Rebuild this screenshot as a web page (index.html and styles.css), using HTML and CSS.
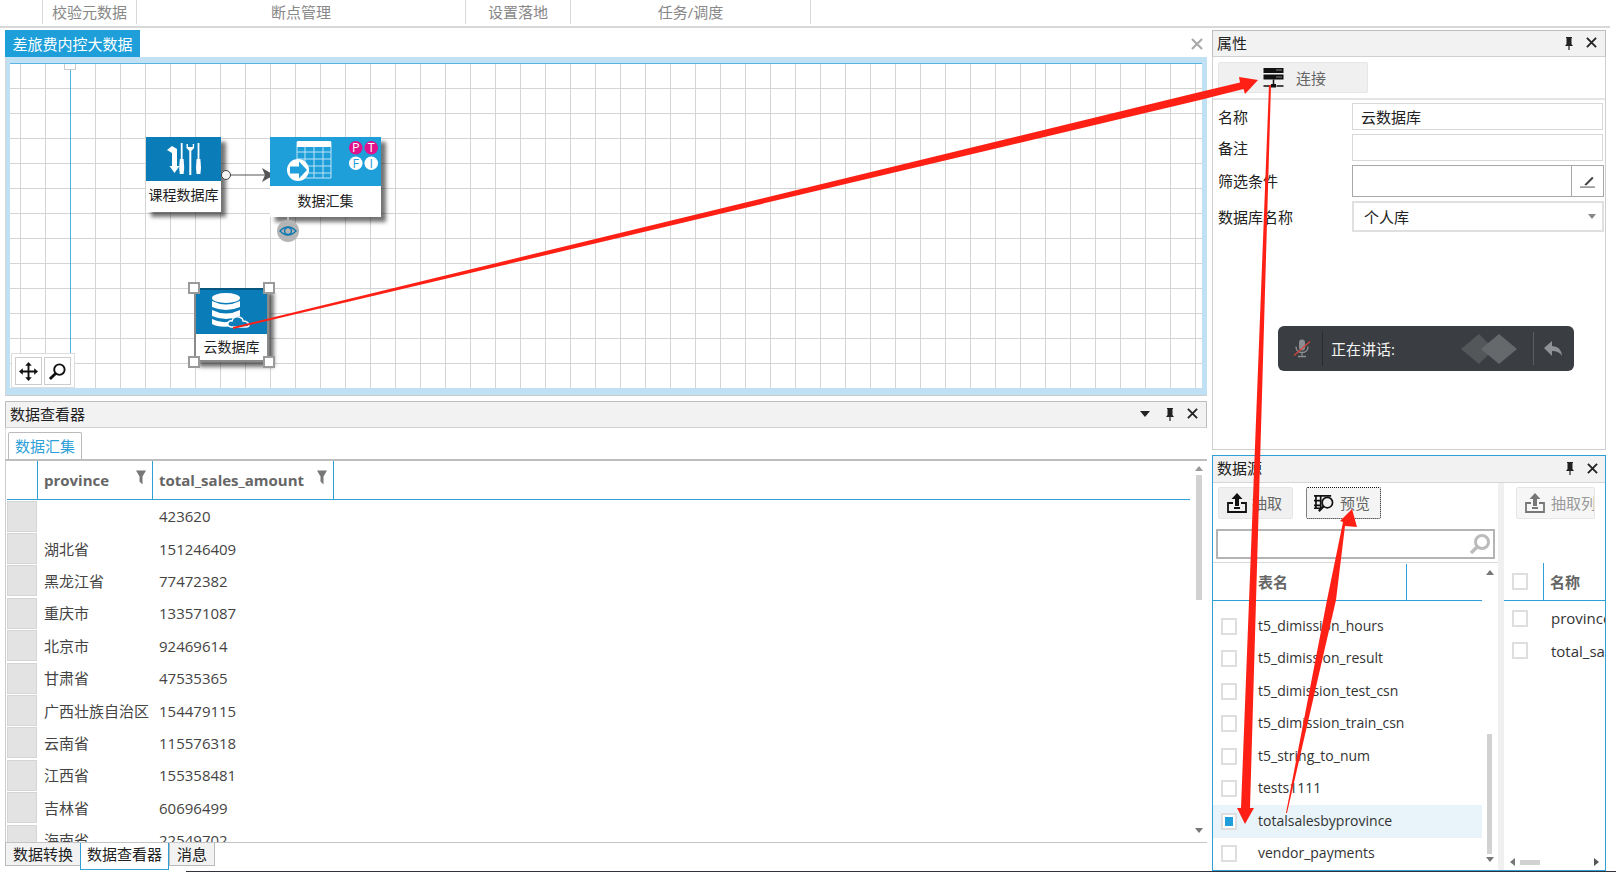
FILE: index.html
```html
<!DOCTYPE html>
<html lang="zh">
<head>
<meta charset="utf-8">
<title>差旅费内控大数据</title>
<link rel="stylesheet" href="styles.css">
</head>
<body>
<nav class="topbar">
  <span class="toptab t1">校验元数据</span>
  <span class="toptab t2">断点管理</span>
  <span class="toptab t3">设置落地</span>
  <span class="toptab t4">任务/调度</span>
</nav>
<div class="workspace">
  <div class="leftcol">
    <section class="doc">
      <div class="doc-tabs">
        <span class="doc-tab">差旅费内控大数据</span>
        <svg class="doc-close" viewBox="0 0 12 12"><path d="M1 1l10 10M11 1L1 11" stroke="#aaa" stroke-width="2.2"/></svg>
      </div>
      <div class="frame">
        <div class="surface">
          <div class="guide"></div>
          <div class="guide-cap"></div>

          <div class="node n1">
            <div class="node-head dark">
              <svg class="ico-tools" viewBox="0 0 36 36">
                <g fill="#fff">
                  <path d="M1 8l5-4 5 3v17h2.500l-5 7-5-7h2.500V11z"/>
                  <rect x="14.800" y="1" width="1.800" height="16"/><path d="M13.800 17h3.800l.6 9-.6 6h-3.800l-.6-6z"/>
                  <path d="M20.500 2v4l2.800 3v24h2V9l2.800-3V2l-1.400 0v3h-4.800V2z"/>
                  <rect x="31.600" y="1" width="1.800" height="16"/><path d="M30.600 17h3.800l.6 9-.6 6h-3.800l-.6-6z"/>
                </g>
              </svg>
            </div>
            <div class="node-label l1">课程数据库</div>
          </div>

          <div class="conn-dot"></div>
          <svg class="conn" viewBox="0 0 44 14"><path d="M0 7h36" stroke="#555" stroke-width="1.2"/><path d="M32 0l12 7-12 7 3-7z" fill="#555"/></svg>

          <div class="node n2">
            <div class="node-head light">
              <svg class="ico-table" viewBox="0 0 62 48">
                <g fill="none" stroke="#bfe3f6" stroke-width="1">
                  <path d="M11 2h34v36H11zM11 12h34M11 19h34M11 26h34M11 33h34M19 2v36M28 2v36M37 2v36"/>
                </g>
                <path d="M11 2q0-1 1-1h32q1 0 1 1v5H11z" fill="#fff"/>
                <circle cx="12" cy="30" r="11" fill="#fff"/>
                <path d="M4 26.500h9v-5l8 8.500-8 8.500v-5H4z" fill="#1e9fda"/>
              </svg>
              <svg class="ico-badges" viewBox="0 0 32 32">
                <circle cx="8" cy="8" r="7" fill="#e0118a"/><circle cx="24" cy="8" r="7" fill="#e0118a"/>
                <circle cx="8" cy="24" r="7" fill="#fff"/><circle cx="24" cy="24" r="7" fill="#fff"/>
                <g class="badge-text"><text x="8" y="12.500" fill="#fff">P</text><text x="24" y="12.500" fill="#fff">T</text><text x="8" y="28.500" fill="#1e9fda">F</text><text x="24" y="28.500" fill="#1e9fda">I</text></g>
              </svg>
            </div>
            <div class="node-label l2">数据汇集</div>
          </div>
          <svg class="eye" viewBox="0 0 22 26"><path d="M11 0v4" stroke="#b5b5b5" stroke-width="2"/><circle cx="11" cy="14" r="11" fill="#b5b5b5"/><path d="M3 14q8-8 16 0q-8 8-16 0z" fill="none" stroke="#1479ae" stroke-width="1.500"/><circle cx="11" cy="14" r="3.400" fill="none" stroke="#1479ae" stroke-width="1.500"/></svg>

          <div class="node n3">
            <div class="node-head dark h3">
              <svg class="ico-db" viewBox="0 0 40 36">
                <g fill="#fff">
                  <ellipse cx="15" cy="5" rx="14" ry="5"/>
                  <path d="M1 8q14 7 28 0v6q-14 6-28 0z"/>
                  <path d="M1 17q14 7 28 0v6q-14 6-28 0z"/>
                  <path d="M1 26q10 5 20 2l1 5q-14 2-21-2z"/>
                </g>
                <path d="M20 34q-4-1-3-4 1-3 4-2 1-5 7-4 4 1 4 4 5 0 6 4 0 2-3 2z" fill="#0a7db8" stroke="#fff" stroke-width="1.400"/>
              </svg>
            </div>
            <div class="node-label l3">云数据库</div>
            <i class="handle tl"></i><i class="handle tr"></i><i class="handle bl"></i><i class="handle br"></i>
          </div>

          <div class="pantools">
            <span class="pantool">
              <svg viewBox="0 0 20 20"><path d="M10 0l3.400 4H11v5h5V6.600l4 3.400-4 3.400V11h-5v5h2.400L10 20l-3.400-4H9v-5H4v2.400L0 10l4-3.400V9h5V4H6.600z" fill="#111"/></svg>
            </span>
            <span class="pantool">
              <svg viewBox="0 0 20 20"><circle cx="12" cy="8" r="5.500" fill="none" stroke="#111" stroke-width="2"/><path d="M8 12l-6 6" stroke="#111" stroke-width="3"/></svg>
            </span>
          </div>
        </div>
      </div>
    </section>

    <section class="viewer">
      <header class="panel-head">
        <span>数据查看器</span>
        <span class="head-icons">
          <svg class="tri" viewBox="0 0 10 6"><path d="M0 0h10L5 6z" fill="#222"/></svg>
          <svg class="pin" viewBox="0 0 10 14"><path d="M2 1h6v1H7.500v6L9 10H1l1.500-2V2H2zM4.400 10h1.200v4H4.400z" fill="#222"/></svg>
          <svg class="x" viewBox="0 0 12 12"><path d="M1 1l10 10M11 1L1 11" stroke="#222" stroke-width="2"/></svg>
        </span>
      </header>
      <div class="subtabs"><span class="subtab">数据汇集</span></div>
      <div class="gridwrap">
        <div class="grid-main">
          <div class="grid-head">
            <span class="gh gh0"></span>
            <span class="gh gh1">province
              <svg class="funnel" viewBox="0 0 10 14"><path d="M0 0h10L6.500 6v8l-3-3V6z" fill="#777"/></svg></span>
            <span class="gh gh2">total_sales_amount
              <svg class="funnel" viewBox="0 0 10 14"><path d="M0 0h10L6.500 6v8l-3-3V6z" fill="#777"/></svg></span>
          </div>
          <div class="grid-body">
            <div class="row"><i class="gut"></i><span class="c1"></span><span>423620</span></div>
            <div class="row"><i class="gut"></i><span class="c1">湖北省</span><span>151246409</span></div>
            <div class="row"><i class="gut"></i><span class="c1">黑龙江省</span><span>77472382</span></div>
            <div class="row"><i class="gut"></i><span class="c1">重庆市</span><span>133571087</span></div>
            <div class="row"><i class="gut"></i><span class="c1">北京市</span><span>92469614</span></div>
            <div class="row"><i class="gut"></i><span class="c1">甘肃省</span><span>47535365</span></div>
            <div class="row"><i class="gut"></i><span class="c1">广西壮族自治区</span><span>154479115</span></div>
            <div class="row"><i class="gut"></i><span class="c1">云南省</span><span>115576318</span></div>
            <div class="row"><i class="gut"></i><span class="c1">江西省</span><span>155358481</span></div>
            <div class="row"><i class="gut"></i><span class="c1">吉林省</span><span>60696499</span></div>
            <div class="row"><i class="gut"></i><span class="c1">海南省</span><span>22549702</span></div>
          </div>
        </div>
        <div class="vscroll vs-main">
          <svg class="arr" viewBox="0 0 8 5"><path d="M0 5h8L4 0z" fill="#999"/></svg>
          <div class="vtrack"><div class="vthumb thumb-main"></div></div>
          <svg class="arr" viewBox="0 0 8 5"><path d="M0 0h8L4 5z" fill="#777"/></svg>
        </div>
      </div>
      <footer class="bottomtabs">
        <span class="btab first">数据转换</span>
        <span class="btab active">数据查看器</span>
        <span class="btab">消息</span>
      </footer>
    </section>
  </div>

  <div class="rightcol">
    <section class="props">
      <header class="panel-head">
        <span>属性</span>
        <span class="head-icons">
          <svg class="pin" viewBox="0 0 10 14"><path d="M2 1h6v1H7.500v6L9 10H1l1.500-2V2H2zM4.400 10h1.200v4H4.400z" fill="#222"/></svg>
          <svg class="x" viewBox="0 0 12 12"><path d="M1 1l10 10M11 1L1 11" stroke="#222" stroke-width="2"/></svg>
        </span>
      </header>
      <div class="props-bar">
        <button class="btn connect">
          <svg class="ico-conn" viewBox="0 0 20 20"><rect x="0" y="0" width="20" height="5" fill="#111"/><rect x="0" y="6.500" width="20" height="5" fill="#111"/><path d="M13 2h5M13 9h5" stroke="#fff" stroke-dasharray="1 1"/><path d="M10 11.500V17M0 18h7M13 18h7" stroke="#111" stroke-width="1.500"/><rect x="7.500" y="16" width="5" height="3.500" fill="#111"/></svg>
          <span>连接</span>
        </button>
      </div>
      <div class="form">
        <label>名称</label><div class="field fh1">云数据库</div>
        <label>备注</label><div class="field fh1"></div>
        <label>筛选条件</label>
        <div class="field filter"><span class="filter-in"></span><span class="filter-btn"><svg viewBox="0 0 16 14"><path d="M5 10L13 2l1.500 1.500L7 11H5z" fill="#444"/><path d="M0 13h16" stroke="#444" stroke-width="1"/></svg></span></div>
        <label>数据库名称</label>
        <div class="field select"><span>个人库</span><svg viewBox="0 0 8 5"><path d="M0 0h8L4 5z" fill="#888"/></svg></div>
      </div>
      <div class="voice">
        <svg class="mic" viewBox="0 0 18 18"><rect x="6" y="0" width="6" height="11" rx="3" fill="#8c8f92"/><path d="M3 7q0 6 6 6t6-6M9 13v3M5 17h8" stroke="#8c8f92" stroke-width="1.300" fill="none"/><path d="M1 16L17 2" stroke="#d9463c" stroke-width="1.200"/></svg>
        <span class="voice-sep"></span>
        <span class="voice-text">正在讲话:</span>
        <svg class="wave" viewBox="0 0 56 30"><path d="M18 0l15 15-15 15L0 15z" fill="#54575a"/><path d="M38 0l18 15-18 15-18-15z" fill="#66696c"/></svg>
        <span class="voice-sep2"></span>
        <svg class="back" viewBox="0 0 18 16"><path d="M8 0v5q9 0 10 10-3-5-10-5v5L0 7z" fill="#8f9295"/></svg>
      </div>
    </section>

    <section class="source">
      <header class="panel-head src-head">
        <span>数据源</span>
        <span class="head-icons">
          <svg class="pin" viewBox="0 0 10 14"><path d="M2 1h6v1H7.500v6L9 10H1l1.500-2V2H2zM4.400 10h1.200v4H4.400z" fill="#222"/></svg>
          <svg class="x" viewBox="0 0 12 12"><path d="M1 1l10 10M11 1L1 11" stroke="#222" stroke-width="2"/></svg>
        </span>
      </header>
      <div class="src-body">
        <div class="src-left">
          <div class="src-bar">
            <button class="btn extract">
              <svg class="ico-up" viewBox="0 0 20 20"><path d="M10 0l5.500 6H12v7H8V6H4.500z" fill="#111"/><path d="M6 10H1v9h18v-9h-5M7 15h6" stroke="#111" stroke-width="1.800" fill="none"/></svg>
              <span>抽取</span>
            </button>
            <button class="btn preview">
              <svg class="ico-prev" viewBox="0 0 22 20"><path d="M0 2h18M2 2v13M7 2v13M0 7h7M0 12h7M0 15h8" stroke="#111" stroke-width="1.800" fill="none"/><circle cx="14" cy="9" r="5.500" fill="#f0f0f0" stroke="#111" stroke-width="1.800"/><path d="M10 13l-5 5" stroke="#111" stroke-width="2.400"/></svg>
              <span>预览</span>
            </button>
          </div>
          <div class="search">
            <svg viewBox="0 0 22 22"><circle cx="13" cy="9" r="6.500" fill="none" stroke="#bbb" stroke-width="3"/><path d="M8 14l-6 6" stroke="#bbb" stroke-width="3.400"/></svg>
          </div>
          <div class="tbl">
            <div class="tbl-main">
              <div class="tbl-head"><span class="th-name">表名</span><span class="th-rest"></span></div>
              <div class="tbl-row"><i class="cb"></i><span>t5_dimission_hours</span></div>
              <div class="tbl-row"><i class="cb"></i><span>t5_dimission_result</span></div>
              <div class="tbl-row"><i class="cb"></i><span>t5_dimission_test_csn</span></div>
              <div class="tbl-row"><i class="cb"></i><span>t5_dimission_train_csn</span></div>
              <div class="tbl-row"><i class="cb"></i><span>t5_string_to_num</span></div>
              <div class="tbl-row"><i class="cb"></i><span>tests1111</span></div>
              <div class="tbl-row sel"><i class="cb on"></i><span>totalsalesbyprovince</span></div>
              <div class="tbl-row"><i class="cb"></i><span>vendor_payments</span></div>
            </div>
            <div class="vscroll vs-src">
              <svg class="arr" viewBox="0 0 8 5"><path d="M0 5h8L4 0z" fill="#777"/></svg>
              <div class="vtrack"><div class="vthumb thumb-src"></div></div>
              <svg class="arr" viewBox="0 0 8 5"><path d="M0 0h8L4 5z" fill="#777"/></svg>
            </div>
          </div>
        </div>
        <div class="src-split"></div>
        <div class="src-right">
          <div class="src-bar bar-r">
            <button class="btn extract-col">
              <svg class="ico-up" viewBox="0 0 20 20"><path d="M10 0l5.500 6H12v7H8V6H4.500z" fill="#777"/><path d="M6 10H1v9h18v-9h-5M7 15h6" stroke="#777" stroke-width="1.800" fill="none"/></svg>
              <span>抽取列</span>
            </button>
          </div>
          <div class="col-head"><span class="ch-cb"><i class="cb"></i></span><span class="ch-name">名称</span></div>
          <div class="col-row"><i class="cb"></i><span>province</span></div>
          <div class="col-row"><i class="cb"></i><span>total_sales_amount</span></div>
          <div class="hscroll">
            <svg viewBox="0 0 5 8"><path d="M5 0v8L0 4z" fill="#777"/></svg>
            <i class="hthumb"></i>
            <svg class="hs-end" viewBox="0 0 5 8"><path d="M0 0v8l5-4z" fill="#555"/></svg>
          </div>
        </div>
      </div>
    </section>
  </div>
</div>
<svg class="annot" viewBox="0 0 1616 872">
  <g fill="#ff2015">
    <path d="M233 327L1200 92L1240 82.500L1239 77L1258 80L1245 94L1243.500 89L1200 100L500 266L233 329z"/>
    <path d="M1269 85L1271 85L1250 808L1254 808L1245 824L1237 808L1241 808z"/>
    <path d="M1286 813L1287 813L1336 600L1345 526L1357 527L1352 509L1340 521L1343 522L1327 600z"/>
  </g>
</svg>
<div class="edge"></div>
</body>
</html>
```
FILE: styles.css
```css
* { box-sizing: border-box; }
html, body { margin: 0; padding: 0; }
body {
  width: 1616px; height: 872px; overflow: hidden; position: relative;
  background: #fff; color: #222;
  font: 15px/1.2 "Open Sans", "Noto Sans CJK SC", sans-serif;
}
i { display: block; }
svg { display: block; flex: none; }

/* top strip */
.topbar { width: 1610px; height: 28px; border-bottom: 2px solid #d8d8d8; padding: 0 0 2px 42px; display: flex; color: #888; }
.toptab { border-left: 1px solid #d8d8d8; display: flex; align-items: center; justify-content: center; }
.t1 { width: 94px; }
.t2 { width: 329px; }
.t3 { width: 105px; }
.t4 { width: 241px; border-right: 1px solid #d8d8d8; }

.workspace { display: flex; gap: 5px; padding: 2px 0 0 5px; height: 843px; }
.leftcol { width: 1202px; display: flex; flex-direction: column; }
.rightcol { width: 394px; display: flex; flex-direction: column; gap: 5px; }

/* designer */
.doc { height: 366px; display: flex; flex-direction: column; }
.doc-tabs { height: 27px; display: flex; justify-content: space-between; align-items: center; flex: none; }
.doc-tab { background: #1e9fda; color: #fff; width: 135px; height: 27px; display: flex; align-items: center; justify-content: center; }
.doc-close { width: 12px; height: 12px; margin-right: 4px; }
.frame { flex: 1; background: #bfe1f3; padding: 6px 5px 7px 4px; border-left: 1px solid #d5d5d5; border-bottom: 1px solid #ccc; }
.surface {
  height: 100%; position: relative; border-top: 1px solid #5ab4e2; background-color: #fff;
  background-image: linear-gradient(#d4d4d4 1px, transparent 1px), linear-gradient(90deg, #d4d4d4 1px, transparent 1px);
  background-size: 25px 25px; background-position: 10px 24px;
}
.guide { position: absolute; left: 60px; top: 0; width: 1px; height: 289px; background: #4db0e4; }
.guide-cap { position: absolute; left: 54px; top: 0; width: 12px; height: 6px; border: 1px solid #ccc; border-top: 0; background: #fff; }

.node { position: absolute; background: #fff; box-shadow: 5px 5px 4px rgba(0,0,0,.55); }
.n1 { left: 136px; top: 73px; width: 75px; height: 75px; }
.n2 { left: 260px; top: 73px; width: 111px; height: 80px; }
.n3 { left: 184px; top: 224px; width: 75px; height: 74px; border: 2px solid #8a8a8a; border-top: 2px solid #05577f; }
.node-head { position: relative; display: flex; justify-content: center; }
.node-head.dark { background: #0a7db8; height: 44px; }
.node-head.light { background: #1e9fda; height: 49px; }
.node-label { display: flex; justify-content: center; align-items: center; font-size: 14px; color: #222; }
.l1 { height: 30px; padding-bottom: 2px; }
.l2 { height: 31px; }
.l3 { height: 28px; padding-bottom: 2px; }
.h3 { height: 42px; }
.ico-tools { width: 36px; height: 36px; margin-top: 5px; }
.ico-table { position: absolute; left: 16px; top: 3px; width: 62px; height: 48px; }
.ico-badges { position: absolute; left: 78px; top: 3px; width: 31px; height: 31px; }
.badge-text text { font: 400 13px "Open Sans", sans-serif; text-anchor: middle; }
.ico-db { width: 40px; height: 36px; margin: 3px 2px 0 0; }
.handle { position: absolute; width: 12px; height: 12px; background: #fff; border: 2px solid #9a9a9a; }
.tl { left: -8px; top: -8px; }
.tr { right: -8px; top: -8px; }
.bl { left: -8px; bottom: -8px; }
.br { right: -8px; bottom: -8px; }
.conn-dot { position: absolute; left: 211px; top: 106px; width: 10px; height: 10px; border-radius: 50%; border: 1px solid #444; background: #f4f4f4; z-index: 2; }
.conn { position: absolute; left: 220px; top: 104px; width: 44px; height: 14px; }
.eye { position: absolute; left: 267px; top: 153px; width: 22px; height: 26px; }
.pantools { position: absolute; left: 1px; top: 289px; width: 64px; height: 35px; background: #fff; border: 1px solid #ddd; display: flex; gap: 2px; padding: 3px; }
.pantool { width: 28px; height: 28px; border: 1px solid #ccc; display: flex; align-items: center; justify-content: center; }
.pantool svg { width: 19px; height: 19px; }

/* panels */
.panel-head { height: 27px; flex: none; background: #f2f2f2; border: 1px solid #bdbdbd; border-bottom-color: #d0d0d0; display: flex; justify-content: space-between; align-items: center; padding: 0 8px 2px 4px; }
.head-icons { display: flex; align-items: center; gap: 12px; }
.tri { width: 10px; height: 6px; margin-right: 3px; }
.pin { width: 10px; height: 14px; }
.x { width: 11px; height: 11px; }

.viewer { margin-top: 5px; flex: 1; display: flex; flex-direction: column; position: relative; }
.subtabs { height: 31px; flex: none; padding: 4px 0 0 2px; display: flex; border-left: 1px solid #ddd; }
.subtab { width: 74px; height: 27px; border: 1px solid #bbb; border-bottom: 0; border-radius: 2px 2px 0 0; color: #2f9fd8; display: flex; align-items: center; justify-content: center; }
.gridwrap { height: 383px; flex: none; border-top: 2px solid #bdbdbd; border-left: 1px solid #ccc; display: flex; padding-left: 1px; }
.grid-main { width: 1183px; overflow: hidden; }
.grid-head { height: 39px; border-bottom: 1px solid #2f9fd8; display: flex; }
.gh { display: flex; align-items: center; justify-content: space-between; font-weight: 700; color: #666; border-right: 1px solid #2f9fd8; }
.gh0 { width: 31px; }
.gh1 { width: 115px; padding: 0 6px 0 6px; }
.gh2 { width: 181px; padding: 0 6px; }
.funnel { width: 10px; height: 15px; margin-bottom: 6px; }
.grid-body { height: 342px; overflow: hidden; }
.row { height: 32.400px; display: flex; align-items: center; color: #444; }
.gut { width: 30px; height: 31px; background: #e3e3e3; border: 1px solid #d5d5d5; margin-right: 7px; flex: none; }
.c1 { width: 115px; white-space: nowrap; }

.vscroll { display: flex; flex-direction: column; align-items: center; }
.vs-main { width: 12px; margin-left: 3px; padding: 5px 0 0; height: 372px; }
.arr { width: 8px; height: 5px; }
.vtrack { flex: 1; width: 6px; padding-top: 4px; }
.vthumb { background: #d2d2d2; width: 6px; }
.thumb-main { height: 125px; margin-top: 0; }

.bottomtabs { height: 29px; flex: none; border-top: 1px solid #c4c4c4; display: flex; align-items: flex-start; position: absolute; left: 0; right: 0; top: 441px; }
.btab { height: 23px; padding: 0 7px; background: #f2f2f2; border: 1px solid #bbb; border-top: 0; display: flex; align-items: center; font-size: 15px; }
.btab.first { margin-right: -1px; }
.btab.active { height: 27px; padding: 0 6px 4px; background: #fff; border: 1px solid #2f9fd8; border-top: 0; position: relative; }

/* properties */
.props { height: 420px; flex: none; border: 1px solid #d0d0d0; position: relative; border-top: 0; margin-top: 0; }
.props .panel-head { margin: 0 -1px; }
.props-bar { height: 43px; border-bottom: 2px solid #e4e4e4; padding: 5px 0 0 5px; }
.btn { font: inherit; color: #666; background: #f0f0f0; border: 1px solid #e6e6e6; border-radius: 2px; display: flex; align-items: center; padding: 0; height: 31px; }
.connect { width: 150px; padding-left: 44px; gap: 12px; }
.ico-conn { width: 21px; height: 20px; }
.form { display: grid; grid-template-columns: 134px 251px; padding: 3px 0 0 5px; row-gap: 4px; }
.form label { display: flex; align-items: center; }
.field { height: 27px; border: 1px solid #d8d8d8; padding-left: 8px; display: flex; align-items: center; }
.filter { height: 32px; padding: 0; border: 1px solid #a8a8a8; width: 252px; }
.filter-in { flex: 1; height: 100%; }
.filter-btn { width: 32px; height: 100%; border-left: 1px solid #a8a8a8; display: flex; align-items: center; justify-content: center; }
.filter-btn svg { width: 15px; height: 13px; }
.select { height: 31px; width: 252px; border: 2px solid #e0e0e0; padding: 0 6px 0 10px; justify-content: space-between; }
.select svg { width: 8px; height: 5px; }

.voice { position: absolute; left: 65px; top: 296px; width: 296px; height: 45px; background: #3a3d41; border-radius: 6px; color: #f4f4f4; display: flex; align-items: center; padding-left: 15px; }
.mic { width: 18px; height: 19px; }
.voice-sep { width: 1px; height: 35px; background: #2a2c2f; margin: 0 8px 0 11px; }
.voice-text { width: 130px; }
.wave { width: 56px; height: 30px; margin-left: 0; }
.voice-sep2 { width: 1px; height: 33px; background: #5c5f62; margin: 0 10px 0 16px; }
.back { width: 18px; height: 16px; }

/* data source */
.source { flex: 1; border: 1px solid #2f9fd8; display: flex; flex-direction: column; height: 414px; }
.src-head { border: 0; border-bottom: 1px solid #d6d6d6; height: 27px; padding-right: 7px; }
.src-body { flex: 1; display: flex; min-height: 0; }
.src-left { width: 285px; display: flex; flex-direction: column; flex: none; }
.src-split { width: 6px; background: #f0f0f0; flex: none; }
.src-right { flex: 1; min-width: 0; overflow: hidden; position: relative; }
.src-bar { height: 46px; display: flex; gap: 13px; padding: 4px 0 0 5px; flex: none; }
.src-bar .btn { height: 32px; }
.extract { width: 75px; padding-left: 8px; gap: 5px; }
.preview { width: 75px; padding-left: 7px; gap: 5px; border: 1px dotted #111; background: #f4f4f4; }
.ico-up { width: 20px; height: 20px; }
.ico-prev { width: 21px; height: 19px; }
.bar-r { padding-left: 12px; }
.extract-col { width: 79px; padding-left: 8px; gap: 6px; color: #999; font-size: 15px; white-space: nowrap; overflow: hidden; background: #f6f6f6; }
.search { height: 30px; margin: 0 3px 0 3px; border: 2px solid #b4b4b4; display: flex; justify-content: flex-end; align-items: center; padding-right: 2px; flex: none; }
.search svg { width: 22px; height: 22px; }
.tbl { flex: 1; display: flex; margin-top: 3px; border-top: 1px solid #d8d8d8; min-height: 0; }
.tbl-main { width: 269px; flex: none; }
.tbl-head { height: 38px; border-bottom: 1px solid #2f9fd8; display: flex; font-weight: 700; color: #666; margin-bottom: 9px; }
.th-name { width: 194px; padding-left: 45px; border-right: 1px solid #2f9fd8; display: flex; align-items: center; margin-top: 1px; }
.tbl-row { height: 32.500px; display: flex; align-items: center; padding-left: 8px; gap: 21px; color: #333; font-size: 14px; }
.tbl-row.sel { background: #e8f3fa; }
.cb { width: 16px; height: 17px; border: 2px solid #dedede; background: #fff; flex: none; position: relative; }
.cb.on::after { content: ""; position: absolute; left: 2px; top: 2px; width: 8px; height: 9px; background: #1e9fda; }
.vs-src { width: 16px; padding-top: 7px; height: 298px; }
.vs-src .vtrack { padding-top: 159px; padding-bottom: 3px; }
.thumb-src { height: 120px; width: 5px; }
.col-head { height: 38px; border-bottom: 1px solid #2f9fd8; display: flex; margin: 34px 0 1px; font-weight: 700; color: #666; }
.ch-cb { width: 40px; border-right: 1px solid #2f9fd8; display: flex; align-items: center; padding-left: 8px; }
.ch-name { padding-left: 6px; display: flex; align-items: center; }
.col-row { height: 32.500px; display: flex; align-items: center; gap: 23px; padding-left: 8px; white-space: nowrap; color: #333; }
.hscroll { position: absolute; left: 6px; right: 6px; bottom: 4px; height: 8px; display: flex; align-items: center; gap: 5px; }
.hscroll svg { width: 5px; height: 8px; }
.hthumb { width: 20px; height: 5px; background: #d2d2d2; }
.hs-end { margin-left: auto; }

/* overlays */
.annot { position: absolute; left: 0; top: 0; width: 1616px; height: 872px; pointer-events: none; z-index: 5; }
.edge { position: absolute; left: 186px; right: 0; bottom: 0; height: 1px; background: #30343a; z-index: 6; }
```
